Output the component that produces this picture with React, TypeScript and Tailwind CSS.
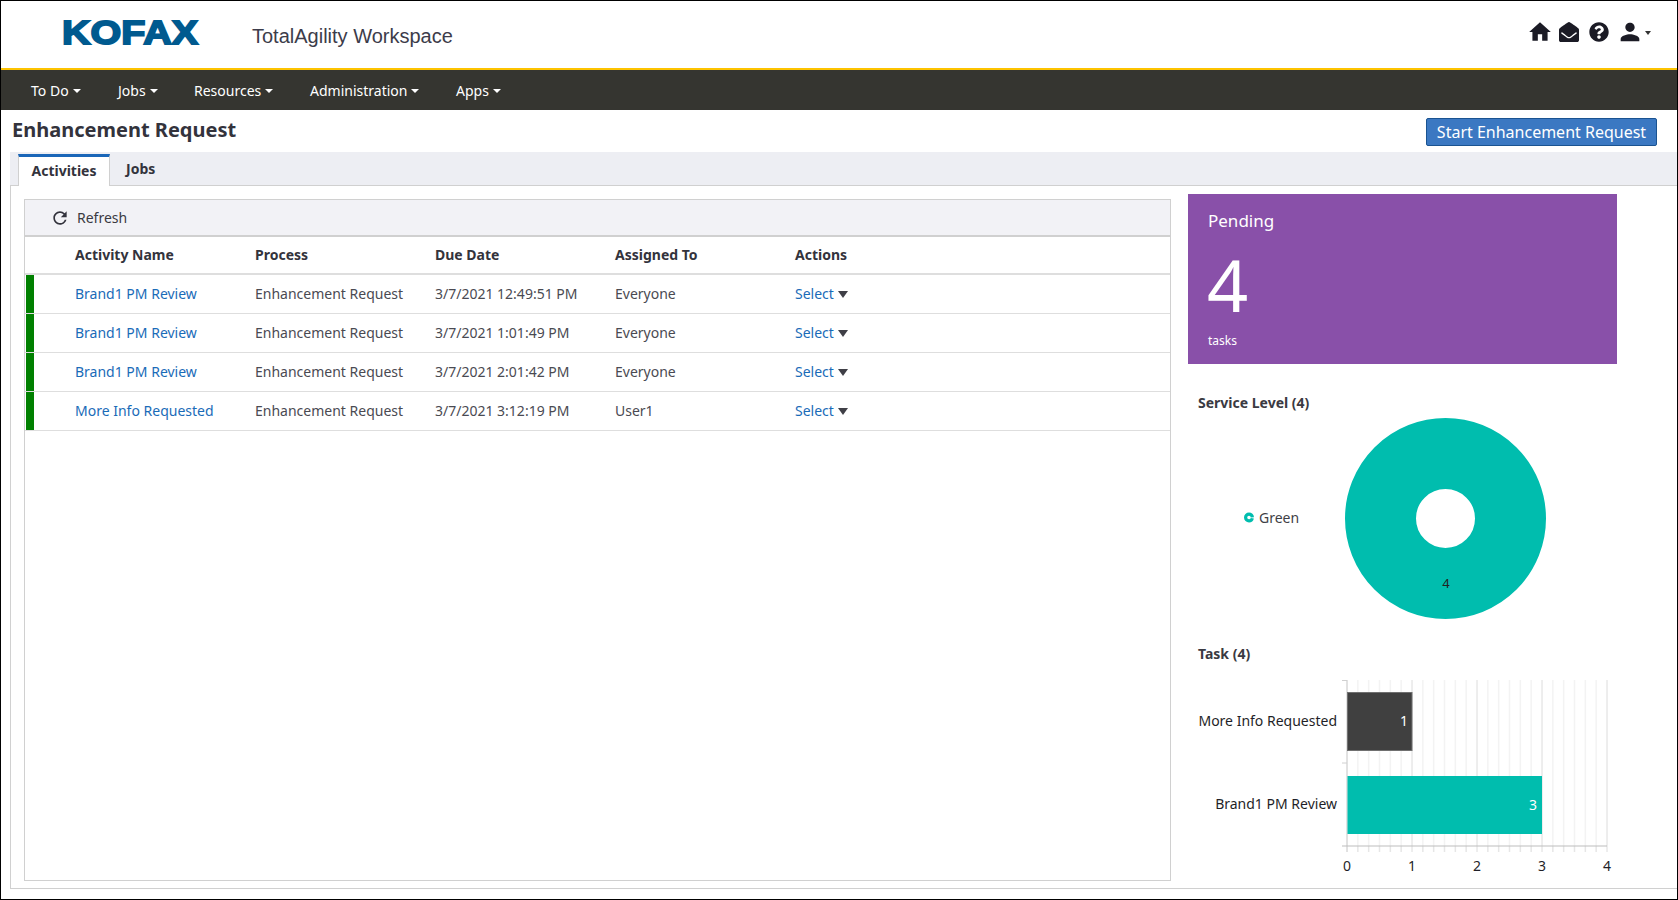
import { FaEnvelopeOpen, FaQuestionCircle } from "react-icons/fa";
import { MdHome, MdPerson, MdRefresh } from "react-icons/md";

const navItems = ["To Do", "Jobs", "Resources", "Administration", "Apps"];
const navGaps = ["w-[87px]", "w-[76px]", "w-[116px]", "w-[146px]", "w-auto"];

const rows = [
  { name: "Brand1 PM Review", due: "3/7/2021 12:49:51 PM", who: "Everyone" },
  { name: "Brand1 PM Review", due: "3/7/2021 1:01:49 PM", who: "Everyone" },
  { name: "Brand1 PM Review", due: "3/7/2021 2:01:42 PM", who: "Everyone" },
  { name: "More Info Requested", due: "3/7/2021 3:12:19 PM", who: "User1" },
];

function KofaxLogo() {
  return (
    <svg width="142" height="36" viewBox="0 0 142 36" className="-mt-[5px] block overflow-visible">
      <text
        x="3"
        y="30"
        textLength="136"
        lengthAdjust="spacingAndGlyphs"
        fontFamily="'Liberation Sans', Arial, sans-serif"
        fontWeight="700"
        fontSize="33"
        fill="#005a8f"
        stroke="#005a8f"
        strokeWidth="1.8"
      >
        KOFAX
      </text>
    </svg>
  );
}

function DonutChart() {
  // center sits at 1445.5 / 518.5 on the page, svg starts at 1188 / 410
  return (
    <svg width="489" height="215" viewBox="0 0 489 215" className="block">
      <circle cx="61" cy="107.5" r="3.4" fill="none" stroke="#00bdae" strokeWidth="3.2" strokeDasharray="19.8 1.6" strokeDashoffset="-0.8" />
      <text x="71" y="112.5" fontSize="14" fill="#3f3f46">Green</text>
      <circle cx="257.5" cy="108.5" r="65" fill="none" stroke="#00bdae" strokeWidth="71" />
      <text x="258" y="177.5" fontSize="13" fill="#222" textAnchor="middle">4</text>
    </svg>
  );
}

function BarChart() {
  // x0 = 159 (page 1347), one unit = 65px, y from 0 (page 680) to 166 (page 846)
  const x0 = 159;
  const unit = 65;
  const minor: number[] = [];
  for (let i = 1; i < 24; i++) if (i % 6 !== 0) minor.push(x0 + (i * unit) / 6);
  return (
    <svg width="489" height="200" viewBox="0 0 489 200" className="block">
      {minor.map((x) => (
        <g key={x}>
          <line x1={x} x2={x} y1="0" y2="166" stroke="#f3f3f3" strokeWidth="1.5" />
          <line x1={x} x2={x} y1="166" y2="172" stroke="#e6e6e6" strokeWidth="1.5" />
        </g>
      ))}
      {[1, 2, 3, 4].map((n) => (
        <line key={n} x1={x0 + n * unit} x2={x0 + n * unit} y1="0" y2="172" stroke="#dcdcdc" strokeWidth="1" />
      ))}
      <line x1={x0} x2={x0} y1="0" y2="172" stroke="#c4c4c4" strokeWidth="1" />
      <line x1={x0 - 5} x2={x0 + 4 * unit} y1="166" y2="166" stroke="#bdbdbd" strokeWidth="1" />
      <line x1={x0 - 5} x2={x0} y1="0.5" y2="0.5" stroke="#d0d0d0" strokeWidth="1" />
      <line x1={x0 - 5} x2={x0} y1="83" y2="83" stroke="#d0d0d0" strokeWidth="1" />
      <rect x={x0 + 0.5} y="12.5" width="64.5" height="58" fill="#404040" stroke="#707070" strokeWidth="1" />
      <rect x={x0 + 0.5} y="96" width="194.5" height="58" fill="#00bdae" />
      <text x={x0 + 57} y="46" fontSize="14" fill="#fff" textAnchor="middle">1</text>
      <text x={x0 + 186} y="130" fontSize="14" fill="#fff" textAnchor="middle">3</text>
      <text x="149" y="46" fontSize="14" fill="#1f1f28" textAnchor="end">More Info Requested</text>
      <text x="149" y="129" fontSize="14" fill="#1f1f28" textAnchor="end">Brand1 PM Review</text>
      {[0, 1, 2, 3, 4].map((n) => (
        <text key={n} x={x0 + n * unit} y="191" fontSize="14" fill="#1f1f28" textAnchor="middle">{n}</text>
      ))}
    </svg>
  );
}

export default function App() {
  return (
    <div className="flex h-[900px] w-[1678px] flex-col overflow-hidden border border-black bg-white font-['Noto_Sans',sans-serif] text-[14px] text-[#3a3a42]">
      {/* Top header */}
      <header className="flex h-[69px] shrink-0 items-center border-b-2 border-[#fdc300] pl-[58px] pr-[26px]">
        <KofaxLogo />
        <span className="ml-[51px] mt-[3px] font-['Liberation_Sans',Arial,sans-serif] text-[20px] text-[#3c3c4a]">
          TotalAgility Workspace
        </span>
        <div className="-mt-[6px] ml-auto flex items-center text-[#1b1b25]">
          <MdHome className="h-[26px] w-[26px]" />
          <FaEnvelopeOpen className="ml-[6px] h-[20px] w-[20px]" />
          <FaQuestionCircle className="ml-[10px] h-[20px] w-[20px]" />
          <MdPerson className="ml-[7px] h-[28px] w-[28px]" />
          <span className="ml-[1px] mt-[2px] h-0 w-0 border-x-[3px] border-t-[4px] border-x-transparent border-t-[#333]" />
        </div>
      </header>

      {/* Nav */}
      <nav className="flex h-[40px] shrink-0 items-center bg-[#353530] pl-[30px] text-white">
        {navItems.map((item, i) => (
          <div key={item} className={`flex items-center ${navGaps[i]}`}>
            <span>{item}</span>
            <span className="ml-[4px] mt-[1px] h-0 w-0 border-x-[4px] border-t-[4px] border-x-transparent border-t-white" />
          </div>
        ))}
      </nav>

      {/* Title row */}
      <div className="flex h-[42px] shrink-0 items-start justify-between pl-[11px] pr-[20px]">
        <h1 className="mt-[5px] text-[20px] font-bold leading-[30px] text-[#33333c]">Enhancement Request</h1>
        <button className="mt-[8px] h-[28px] w-[231px] rounded-[2px] border border-[#1a5391] bg-[#3b78c2] text-[16px] leading-none text-white">
          Start Enhancement Request
        </button>
      </div>

      {/* Tabs + content */}
      <div className="ml-[9px] flex min-h-0 flex-1 flex-col">
        <div className="flex h-[34px] shrink-0 items-end border-b border-[#d0d0d0] bg-[#edeef3] pl-[8px]">
          <div className="-mb-px flex h-[32px] w-[92px] items-center justify-center border-x border-t-[3px] border-x-[#d0d0d0] border-t-[#1a66b8] bg-white pb-[3px] font-bold text-[#33333c]">
            Activities
          </div>
          <div className="mb-[6px] ml-[16px] font-bold leading-[20px] text-[#33333c]">Jobs</div>
        </div>

        <div className="mb-[10px] flex min-h-0 flex-1 items-start border-b border-l border-[#d0d0d0] pl-[13px] pt-[8px]">
          {/* Grid */}
          <div className="mt-[5px] flex h-[682px] w-[1147px] shrink-0 flex-col border border-[#d0d0d0]">
            <div className="flex h-[37px] shrink-0 items-center border-b-2 border-[#d0d0d0] bg-[#f2f2f6] pl-[25px]">
              <MdRefresh className="h-[20px] w-[20px] text-[#33333d]" />
              <span className="ml-[7px]">Refresh</span>
            </div>
            <div className="flex h-[38px] shrink-0 items-center border-b-2 border-[#dedede] pl-[50px] pb-px font-bold text-[#33333c]">
              <div className="w-[180px]">Activity Name</div>
              <div className="w-[180px]">Process</div>
              <div className="w-[180px]">Due Date</div>
              <div className="w-[180px]">Assigned To</div>
              <div className="w-[180px]">Actions</div>
            </div>
            {rows.map((row, i) => (
              <div key={i} className="flex h-[39px] shrink-0 border-b border-[#dedede]">
                <div className="ml-px w-[8px] bg-[#008000]" />
                <div className="flex items-center pb-[2px] pl-[41px] text-[#4a4a52]">
                  <div className="w-[180px] text-[#1a6bb8]">{row.name}</div>
                  <div className="w-[180px]">Enhancement Request</div>
                  <div className="w-[180px]">{row.due}</div>
                  <div className="w-[180px]">{row.who}</div>
                  <div className="flex w-[180px] items-center text-[#1a6bb8]">
                    Select
                    <span className="ml-[4px] mt-[2px] h-0 w-0 border-x-[5px] border-t-[7px] border-x-transparent border-t-[#3f3f46]" />
                  </div>
                </div>
              </div>
            ))}
          </div>

          {/* Right column */}
          <div className="ml-[17px] flex w-[489px] shrink-0 flex-col">
            <div className="flex h-[170px] w-[429px] flex-col bg-[#8950a9] pl-[20px] text-white">
              <div className="mt-[13px] text-[17px] leading-[28px]">Pending</div>
              <div className="-ml-px mt-[10px] text-[72px] leading-[78px]">4</div>
              <div className="mt-[9px] text-[12px] leading-[18px]">tasks</div>
            </div>
            <div className="mt-[29px] pl-[10px] font-bold leading-[20px] text-[#3a3a42]">Service Level (4)</div>
            <div className="mt-[-3px]">
              <DonutChart />
            </div>
            <div className="mt-[19px] pl-[10px] font-bold leading-[20px] text-[#3a3a42]">Task (4)</div>
            <div className="mt-[16px]">
              <BarChart />
            </div>
          </div>
        </div>
      </div>
    </div>
  );
}
